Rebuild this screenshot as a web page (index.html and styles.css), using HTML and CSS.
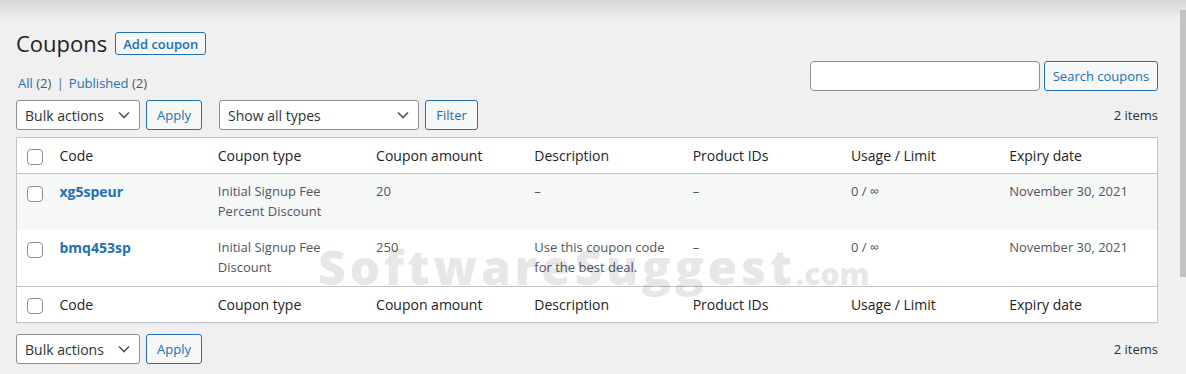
FILE: index.html
```html
<!DOCTYPE html>
<html lang="en">
<head>
    <meta charset="UTF-8">
    <meta name="viewport" content="width=device-width, initial-scale=1.0">
    <title>Coupons</title>
    <link rel="stylesheet" href="styles.css">
</head>
<body>
    <div class="scrollbar"></div>
    <div class="wrap">
        <div class="page-head">
            <h1 class="page-title">Coupons</h1>
            <a class="btn btn-add" href="#">Add coupon</a>
        </div>

        <div class="filters-row">
            <ul class="subsubsub">
                <li><a href="#" class="current">All <span class="count">(2)</span></a> <span class="sep">|</span></li>
                <li><a href="#">Published <span class="count">(2)</span></a></li>
            </ul>
            <div class="search-box">
                <input type="search" class="search-input">
                <button class="btn btn-search">Search coupons</button>
            </div>
        </div>

        <div class="tablenav">
            <div class="actions">
                <div class="select select-bulk">
                    <span>Bulk actions</span>
                    <svg width="12" height="8" viewBox="0 0 12 8"><path d="M1 1.5l5 5 5-5" fill="none" stroke="#50575e" stroke-width="1.6"/></svg>
                </div>
                <button class="btn btn-apply">Apply</button>
            </div>
            <div class="actions">
                <div class="select select-type">
                    <span>Show all types</span>
                    <svg width="12" height="8" viewBox="0 0 12 8"><path d="M1 1.5l5 5 5-5" fill="none" stroke="#50575e" stroke-width="1.6"/></svg>
                </div>
                <button class="btn btn-filter">Filter</button>
            </div>
            <div class="displaying-num">2 items</div>
        </div>

        <div class="table-holder">
            <table class="list-table">
                <colgroup>
                    <col class="col-check">
                    <col><col><col><col><col><col><col>
                </colgroup>
                <thead>
                    <tr>
                        <td class="check-column"><span class="checkbox"></span></td>
                        <th>Code</th>
                        <th>Coupon type</th>
                        <th>Coupon amount</th>
                        <th>Description</th>
                        <th>Product IDs</th>
                        <th>Usage / Limit</th>
                        <th>Expiry date</th>
                    </tr>
                </thead>
                <tbody>
                    <tr class="alt">
                        <td class="check-column"><span class="checkbox"></span></td>
                        <td><a class="code" href="#">xg5speur</a></td>
                        <td>Initial Signup Fee<br>Percent Discount</td>
                        <td>20</td>
                        <td>&ndash;</td>
                        <td>&ndash;</td>
                        <td>0 / &infin;</td>
                        <td>November 30, 2021</td>
                    </tr>
                    <tr>
                        <td class="check-column"><span class="checkbox"></span></td>
                        <td><a class="code" href="#">bmq453sp</a></td>
                        <td>Initial Signup Fee<br>Discount</td>
                        <td>250</td>
                        <td>Use this coupon code<br>for the best deal.</td>
                        <td>&ndash;</td>
                        <td>0 / &infin;</td>
                        <td>November 30, 2021</td>
                    </tr>
                </tbody>
                <tfoot>
                    <tr>
                        <td class="check-column"><span class="checkbox"></span></td>
                        <th>Code</th>
                        <th>Coupon type</th>
                        <th>Coupon amount</th>
                        <th>Description</th>
                        <th>Product IDs</th>
                        <th>Usage / Limit</th>
                        <th>Expiry date</th>
                    </tr>
                </tfoot>
            </table>
            <div class="watermark">SoftwareSuggest<span>.com</span></div>
        </div>

        <div class="tablenav tablenav-bottom">
            <div class="actions">
                <div class="select select-bulk">
                    <span>Bulk actions</span>
                    <svg width="12" height="8" viewBox="0 0 12 8"><path d="M1 1.5l5 5 5-5" fill="none" stroke="#50575e" stroke-width="1.6"/></svg>
                </div>
                <button class="btn btn-apply">Apply</button>
            </div>
            <div class="displaying-num">2 items</div>
        </div>
    </div>
</body>
</html>
```

FILE: styles.css
```css
body {
    margin: 0;
    font-family: 'Open Sans', 'Noto Sans', sans-serif;
    font-size: 13px;
    color: #3c434a;
    background: linear-gradient(#d6d6d7, #f0f0f1 20px) no-repeat, #f0f0f1;
    height: 374px;
    overflow: hidden;
}

.scrollbar {
    position: absolute;
    top: 10px;
    right: 0;
    width: 6px;
    height: 267px;
    background: #c3c3c3;
}

.wrap {
    padding: 28px 28px 0 16px;
}

.page-head {
    display: flex;
    align-items: center;
    gap: 8px;
}

.page-title {
    margin: 0;
    font-size: 22px;
    font-weight: 400;
    line-height: 30px;
    color: #1d2327;
}

.btn {
    display: inline-flex;
    align-items: center;
    justify-content: center;
    box-sizing: border-box;
    height: 30px;
    padding: 0;
    font-family: inherit;
    font-size: 13px;
    color: #2271b1;
    background: #f6f7f7;
    border: 1px solid #2271b1;
    border-radius: 3px;
    text-decoration: none;
}

.btn-add {
    width: 91px;
    height: 23px;
    font-weight: 600;
    margin-top: 1px;
}

.btn-search {
    width: 114px;
}

.btn-apply {
    width: 56px;
}

.btn-filter {
    width: 53px;
}

.filters-row {
    display: flex;
    justify-content: space-between;
    align-items: flex-end;
    margin-top: 3px;
}

.subsubsub {
    list-style: none;
    margin: 0 0 0 2px;
    padding: 0;
    display: flex;
    gap: 5px;
    line-height: 16px;
    color: #646970;
}

.subsubsub a {
    color: #2271b1;
    text-decoration: none;
}

.subsubsub .count {
    color: #50575e;
}

.subsubsub .sep {
    margin-left: 2px;
}

.search-box {
    display: flex;
    gap: 4px;
}

.search-input {
    box-sizing: border-box;
    width: 230px;
    height: 30px;
    border: 1px solid #8c8f94;
    border-radius: 4px;
    background: #fff;
}

.tablenav {
    display: flex;
    align-items: center;
    gap: 17px;
    margin-top: 9px;
    height: 30px;
}

.tablenav-bottom {
    margin-top: 11px;
}

.actions {
    display: flex;
    gap: 6px;
}

.select {
    box-sizing: border-box;
    display: flex;
    align-items: center;
    justify-content: space-between;
    height: 30px;
    padding: 0 9px 0 8px;
    font-size: 14px;
    color: #2c3338;
    background: #fff;
    border: 1px solid #8c8f94;
    border-radius: 3px;
}

.select-bulk {
    width: 124px;
}

.select-type {
    width: 200px;
}

.displaying-num {
    margin-left: auto;
    color: #2c3338;
}

.table-holder {
    position: relative;
    margin-top: 7px;
}

.list-table {
    width: 100%;
    table-layout: fixed;
    border-collapse: collapse;
    background: #fff;
    border: 1px solid #c3c4c7;
    box-shadow: 0 1px 1px rgba(0, 0, 0, 0.04);
}

.col-check {
    width: 33px;
}

.list-table th,
.list-table td {
    text-align: left;
    vertical-align: top;
    padding: 8px 10px 9px;
    line-height: 19.5px;
}

.list-table thead th,
.list-table tfoot th {
    font-weight: 400;
    font-size: 14px;
    line-height: 19px;
    color: #1d2327;
    padding: 8px 10px;
}

.list-table thead tr {
    border-bottom: 1px solid #c3c4c7;
}

.list-table tfoot tr {
    border-top: 1px solid #c3c4c7;
}

.list-table tbody td {
    color: #50575e;
}

.list-table tr.alt {
    background: #f6f7f7;
}

.list-table .check-column {
    padding: 12px 0 0 10px;
}

.list-table thead .check-column,
.list-table tfoot .check-column {
    padding: 11px 0 0 10px;
}

.checkbox {
    display: block;
    box-sizing: border-box;
    width: 16px;
    height: 16px;
    background: #fff;
    border: 1px solid #8c8f94;
    border-radius: 4px;
}

.code {
    font-size: 14px;
    font-weight: 700;
    color: #2271b1;
    text-decoration: none;
}

.watermark {
    position: absolute;
    left: 302px;
    top: 106px;
    font-family: 'Open Sans', sans-serif;
    font-size: 48px;
    line-height: 1;
    font-weight: 800;
    color: rgba(0, 0, 0, 0.11);
    letter-spacing: 3.8px;
    white-space: nowrap;
    pointer-events: none;
}

.watermark span {
    font-size: 30px;
    letter-spacing: 0;
}
```
